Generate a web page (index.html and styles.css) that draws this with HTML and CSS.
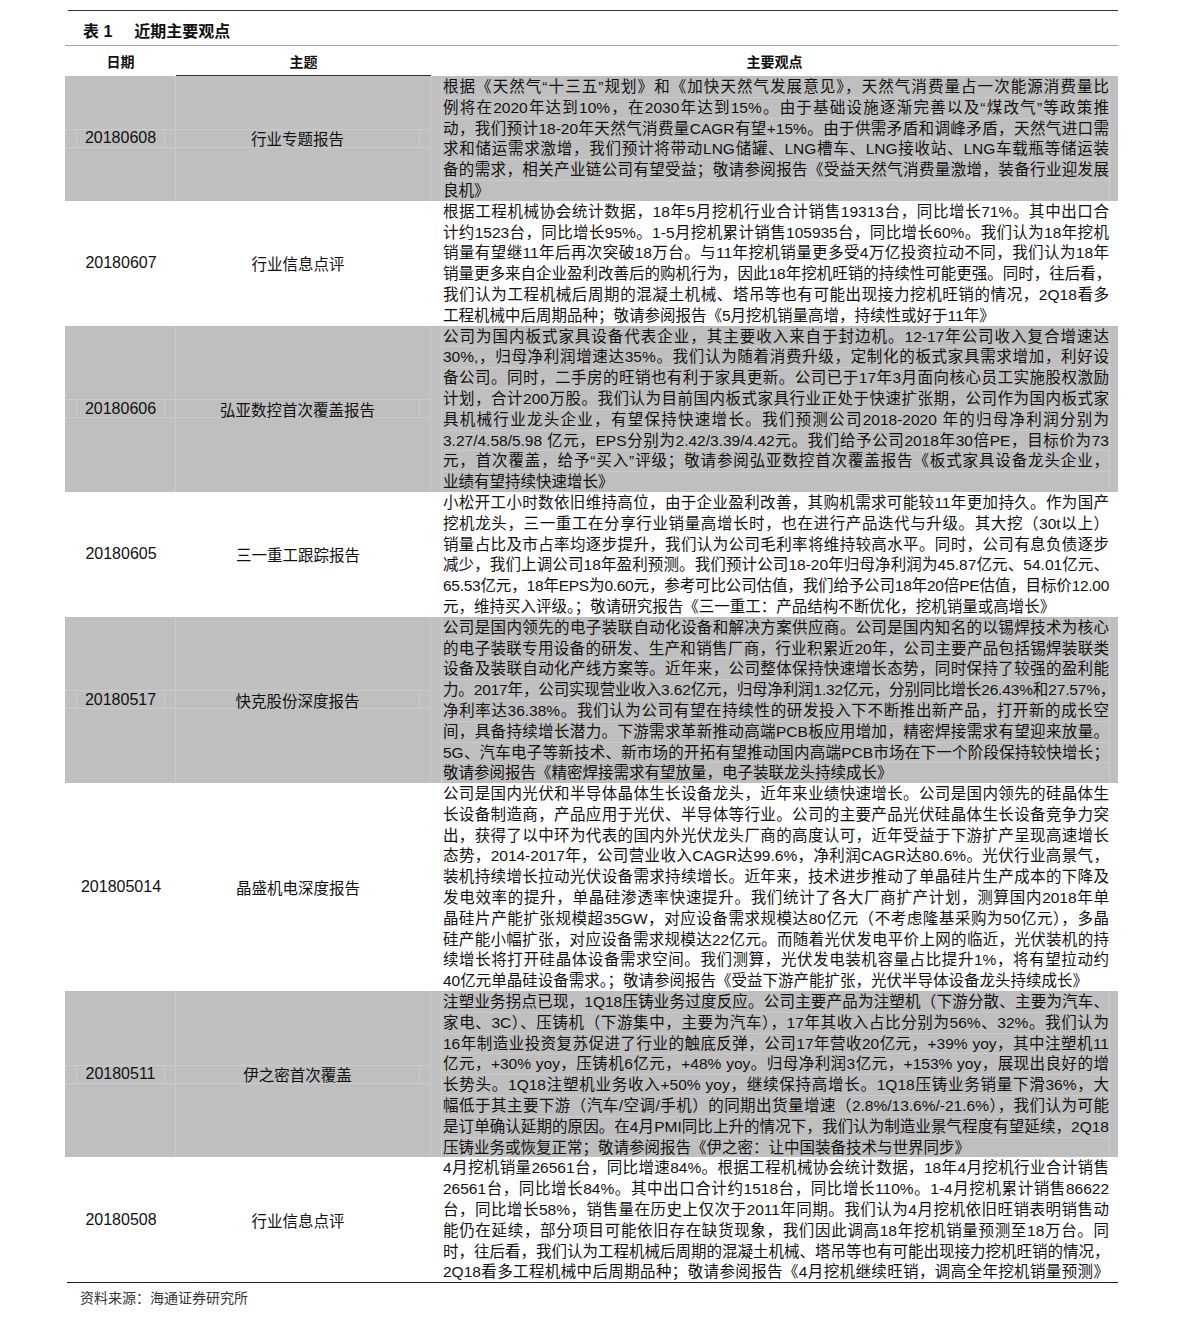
FILE: index.html
```html
<!DOCTYPE html>
<html lang="zh-CN">
<head>
<meta charset="utf-8">
<title>表1 近期主要观点</title>
<link rel="stylesheet" href="styles.css">
</head>
<body>
<div class="page">
  <div class="topline"></div>
  <div class="title"><span class="tno">表 1</span><span>近期主要观点</span></div>
  <div class="rule"></div>
  <div class="thead">
    <div class="h h1">日期</div>
    <div class="h h2">主题</div>
    <div class="h h3">主要观点</div>
  </div>

  <div class="row gray">
    <div class="c1"><div class="band"><div class="box">20180608</div></div></div>
    <div class="c2"><div class="band"><div class="box">行业专题报告</div></div></div>
    <div class="c3"><div class="lines">
      <span class="ln">根据《天然气“十三五”规划》和《加快天然气发展意见》，天然气消费量占一次能源消费量比</span>
      <span class="ln">例将在2020年达到10%，在2030年达到15%。由于基础设施逐渐完善以及“煤改气”等政策推</span>
      <span class="ln">动，我们预计18-20年天然气消费量CAGR有望+15%。由于供需矛盾和调峰矛盾，天然气进口需</span>
      <span class="ln">求和储运需求激增，我们预计将带动LNG储罐、LNG槽车、LNG接收站、LNG车载瓶等储运装</span>
      <span class="ln">备的需求，相关产业链公司有望受益；敬请参阅报告《受益天然气消费量激增，装备行业迎发展</span>
      <span class="ln last">良机》</span>
    </div></div>
  </div>

  <div class="row">
    <div class="c1"><div class="band"><div class="box">20180607</div></div></div>
    <div class="c2"><div class="band"><div class="box">行业信息点评</div></div></div>
    <div class="c3"><div class="lines">
      <span class="ln">根据工程机械协会统计数据，18年5月挖机行业合计销售19313台，同比增长71%。其中出口合</span>
      <span class="ln">计约1523台，同比增长95%。1-5月挖机累计销售105935台，同比增长60%。我们认为18年挖机</span>
      <span class="ln">销量有望继11年后再次突破18万台。与11年挖机销量更多受4万亿投资拉动不同，我们认为18年</span>
      <span class="ln">销量更多来自企业盈利改善后的购机行为，因此18年挖机旺销的持续性可能更强。同时，往后看，</span>
      <span class="ln">我们认为工程机械后周期的混凝土机械、塔吊等也有可能出现接力挖机旺销的情况，2Q18看多</span>
      <span class="ln last">工程机械中后周期品种；敬请参阅报告《5月挖机销量高增，持续性或好于11年》</span>
    </div></div>
  </div>

  <div class="row gray">
    <div class="c1"><div class="band"><div class="box">20180606</div></div></div>
    <div class="c2"><div class="band"><div class="box">弘亚数控首次覆盖报告</div></div></div>
    <div class="c3"><div class="lines">
      <span class="ln">公司为国内板式家具设备代表企业，其主要收入来自于封边机。12-17年公司收入复合增速达</span>
      <span class="ln">30%,，归母净利润增速达35%。我们认为随着消费升级，定制化的板式家具需求增加，利好设</span>
      <span class="ln">备公司。同时，二手房的旺销也有利于家具更新。公司已于17年3月面向核心员工实施股权激励</span>
      <span class="ln">计划，合计200万股。我们认为目前国内板式家具行业正处于快速扩张期，公司作为国内板式家</span>
      <span class="ln">具机械行业龙头企业，有望保持快速增长。我们预测公司2018-2020 年的归母净利润分别为</span>
      <span class="ln">3.27/4.58/5.98 亿元，EPS分别为2.42/3.39/4.42元。我们给予公司2018年30倍PE，目标价为73</span>
      <span class="ln">元，首次覆盖，给予“买入”评级；敬请参阅弘亚数控首次覆盖报告《板式家具设备龙头企业，</span>
      <span class="ln last">业绩有望持续快速增长》</span>
    </div></div>
  </div>

  <div class="row">
    <div class="c1"><div class="band"><div class="box">20180605</div></div></div>
    <div class="c2"><div class="band"><div class="box">三一重工跟踪报告</div></div></div>
    <div class="c3"><div class="lines">
      <span class="ln">小松开工小时数依旧维持高位，由于企业盈利改善，其购机需求可能较11年更加持久。作为国产</span>
      <span class="ln">挖机龙头，三一重工在分享行业销量高增长时，也在进行产品迭代与升级。其大挖（30t以上）</span>
      <span class="ln">销量占比及市占率均逐步提升，我们认为公司毛利率将维持较高水平。同时，公司有息负债逐步</span>
      <span class="ln">减少，我们上调公司18年盈利预测。我们预计公司18-20年归母净利润为45.87亿元、54.01亿元、</span>
      <span class="ln tight">65.53亿元，18年EPS为0.60元，参考可比公司估值，我们给予公司18年20倍PE估值，目标价12.00</span>
      <span class="ln last">元，维持买入评级。；敬请研究报告《三一重工：产品结构不断优化，挖机销量或高增长》</span>
    </div></div>
  </div>

  <div class="row gray">
    <div class="c1"><div class="band"><div class="box">20180517</div></div></div>
    <div class="c2"><div class="band"><div class="box">快克股份深度报告</div></div></div>
    <div class="c3"><div class="lines">
      <span class="ln">公司是国内领先的电子装联自动化设备和解决方案供应商。公司是国内知名的以锡焊技术为核心</span>
      <span class="ln">的电子装联专用设备的研发、生产和销售厂商，行业积累近20年，公司主要产品包括锡焊装联类</span>
      <span class="ln">设备及装联自动化产线方案等。近年来，公司整体保持快速增长态势，同时保持了较强的盈利能</span>
      <span class="ln tight2">力。2017年，公司实现营业收入3.62亿元，归母净利润1.32亿元，分别同比增长26.43%和27.57%，</span>
      <span class="ln">净利率达36.38%。我们认为公司有望在持续性的研发投入下不断推出新产品，打开新的成长空</span>
      <span class="ln">间，具备持续增长潜力。下游需求革新推动高端PCB板应用增加，精密焊接需求有望迎来放量。</span>
      <span class="ln">5G、汽车电子等新技术、新市场的开拓有望推动国内高端PCB市场在下一个阶段保持较快增长；</span>
      <span class="ln last">敬请参阅报告《精密焊接需求有望放量，电子装联龙头持续成长》</span>
    </div></div>
  </div>

  <div class="row">
    <div class="c1"><div class="band"><div class="box">201805014</div></div></div>
    <div class="c2"><div class="band"><div class="box">晶盛机电深度报告</div></div></div>
    <div class="c3"><div class="lines">
      <span class="ln">公司是国内光伏和半导体晶体生长设备龙头，近年来业绩快速增长。公司是国内领先的硅晶体生</span>
      <span class="ln">长设备制造商，产品应用于光伏、半导体等行业。公司的主要产品光伏硅晶体生长设备竞争力突</span>
      <span class="ln">出，获得了以中环为代表的国内外光伏龙头厂商的高度认可，近年受益于下游扩产呈现高速增长</span>
      <span class="ln">态势，2014-2017年，公司营业收入CAGR达99.6%，净利润CAGR达80.6%。光伏行业高景气，</span>
      <span class="ln">装机持续增长拉动光伏设备需求持续增长。近年来，技术进步推动了单晶硅片生产成本的下降及</span>
      <span class="ln">发电效率的提升，单晶硅渗透率快速提升。我们统计了各大厂商扩产计划，测算国内2018年单</span>
      <span class="ln">晶硅片产能扩张规模超35GW，对应设备需求规模达80亿元（不考虑隆基采购为50亿元），多晶</span>
      <span class="ln">硅产能小幅扩张，对应设备需求规模达22亿元。而随着光伏发电平价上网的临近，光伏装机的持</span>
      <span class="ln">续增长将打开硅晶体设备需求空间。我们测算，光伏发电装机容量占比提升1%，将有望拉动约</span>
      <span class="ln last">40亿元单晶硅设备需求。；敬请参阅报告《受益下游产能扩张，光伏半导体设备龙头持续成长》</span>
    </div></div>
  </div>

  <div class="row gray">
    <div class="c1"><div class="band"><div class="box">20180511</div></div></div>
    <div class="c2"><div class="band"><div class="box">伊之密首次覆盖</div></div></div>
    <div class="c3"><div class="lines">
      <span class="ln">注塑业务拐点已现，1Q18压铸业务过度反应。公司主要产品为注塑机（下游分散、主要为汽车、</span>
      <span class="ln">家电、3C）、压铸机（下游集中，主要为汽车），17年其收入占比分别为56%、32%。我们认为</span>
      <span class="ln">16年制造业投资复苏促进了行业的触底反弹，公司17年营收20亿元，+39% yoy，其中注塑机11</span>
      <span class="ln">亿元，+30% yoy，压铸机6亿元，+48% yoy。归母净利润3亿元，+153% yoy，展现出良好的增</span>
      <span class="ln">长势头。1Q18注塑机业务收入+50% yoy，继续保持高增长。1Q18压铸业务销量下滑36%，大</span>
      <span class="ln">幅低于其主要下游（汽车/空调/手机）的同期出货量增速（2.8%/13.6%/-21.6%），我们认为可能</span>
      <span class="ln">是订单确认延期的原因。在4月PMI同比上升的情况下，我们认为制造业景气程度有望延续，2Q18</span>
      <span class="ln last">压铸业务或恢复正常；敬请参阅报告《伊之密：让中国装备技术与世界同步》</span>
    </div></div>
  </div>

  <div class="row">
    <div class="c1"><div class="band"><div class="box">20180508</div></div></div>
    <div class="c2"><div class="band"><div class="box">行业信息点评</div></div></div>
    <div class="c3"><div class="lines">
      <span class="ln">4月挖机销量26561台，同比增速84%。根据工程机械协会统计数据，18年4月挖机行业合计销售</span>
      <span class="ln">26561台，同比增长84%。其中出口合计约1518台，同比增长110%。1-4月挖机累计销售86622</span>
      <span class="ln">台，同比增长58%，销售量在历史上仅次于2011年同期。我们认为4月挖机依旧旺销表明销售动</span>
      <span class="ln">能仍在延续，部分项目可能依旧存在缺货现象，我们因此调高18年挖机销量预测至18万台。同</span>
      <span class="ln">时，往后看，我们认为工程机械后周期的混凝土机械、塔吊等也有可能出现接力挖机旺销的情况，</span>
      <span class="ln">2Q18看多工程机械中后周期品种；敬请参阅报告《4月挖机继续旺销，调高全年挖机销量预测》</span>
    </div></div>
  </div>

  <div class="bottomline"></div>
  <div class="src">资料来源：海通证券研究所</div>
</div>
</body>
</html>
```

FILE: styles.css
```css
* { box-sizing: border-box; }

body {
  margin: 0;
  background: #ffffff;
  color: #111111;
  font-family: "Liberation Sans", "Noto Sans CJK SC", sans-serif;
}

.page {
  width: 1053px;
  margin-left: 65px;
  padding-top: 10px;
}

.topline {
  margin-left: 3px;
  border-top: 1px solid #3a3a3a;
}

.title {
  height: 34px;
  padding-top: 4px;
  padding-left: 18px;
  display: flex;
  align-items: center;
  gap: 22px;
  font-size: 16px;
  font-weight: bold;
  color: #111;
}

.rule {
  border-top: 1px solid #a3a3a3;
}

.thead {
  display: grid;
  grid-template-columns: 111px 255px 687px;
  height: 30px;
}

.h {
  display: flex;
  align-items: center;
  justify-content: center;
  font-size: 14px;
  font-weight: bold;
  color: #111;
}

.h2 {
  border-bottom: 1px solid #333333;
}

.row {
  display: grid;
  grid-template-columns: 111px 255px 687px;
}

.row.gray {
  background: #bfbfbf;
}

.c1, .c2 {
  display: flex;
  flex-direction: column;
  justify-content: center;
  font-size: 15.5px;
}

.c1 {
  font-size: 16px;
}

.row.gray .c1,
.row.gray .c2 {
  border-right: 1px solid #cbcbcb;
}

.band {
  height: 19px;
  border-top: 1px solid transparent;
  border-bottom: 1px solid transparent;
}

.box {
  height: 100%;
  display: flex;
  align-items: center;
  justify-content: center;
  border-left: 1px solid transparent;
  border-right: 1px solid transparent;
}

.c1 .box {
  margin: 0 10px 0 11px;
}

.c2 .box {
  margin: 0 10px 0 0;
  border-left: none;
}

.row.gray .band,
.row.gray .box {
  border-color: #cbcbcb;
}

.c3 {
  padding: 0 8px 0 10px;
}

.lines {
  border-left: 1px solid transparent;
  border-right: 1px solid transparent;
  padding-left: 1px;
}

.row.gray .lines {
  border-color: #cbcbcb;
}

.ln {
  display: block;
  height: 20.8px;
  line-height: 21.6px;
  font-size: 15.5px;
  white-space: nowrap;
  text-align: justify;
  text-align-last: justify;
}

.ln.last {
  text-align-last: left;
}

.ln.tight {
  letter-spacing: -0.3px;
}

.ln.tight2 {
  letter-spacing: -0.15px;
}

.row.gray .ln + .ln {
  box-shadow: inset 0 1px 0 #cacaca;
}

.bottomline {
  margin-left: 2px;
  border-top: 1px solid #222222;
}

.src {
  padding-top: 5px;
  padding-left: 15px;
  font-size: 14px;
  line-height: 20px;
  color: #333333;
}
```
